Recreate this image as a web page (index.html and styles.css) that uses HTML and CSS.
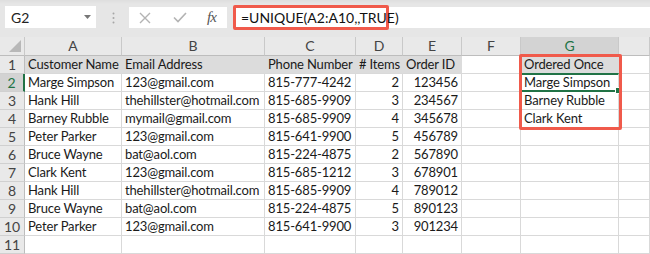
FILE: index.html
```html
<!DOCTYPE html>
<html>
<head>
<meta charset="utf-8">
<link rel="stylesheet" href="styles.css">
</head>
<body>
<div class="app">
  <div class="toolbar">
    <div class="namebox"><span class="ref">G2</span><svg class="caret" width="7" height="4" viewBox="0 0 7 4"><path d="M0 0H7L3.5 4Z" fill="#777"/></svg></div>
    <svg class="grip" width="3" height="12" viewBox="0 0 3 12"><circle cx="1.5" cy="1.5" r="1" fill="#a6a6a6"/><circle cx="1.5" cy="6" r="1" fill="#a6a6a6"/><circle cx="1.5" cy="10.5" r="1" fill="#a6a6a6"/></svg>
    <div class="fxbtns">
      <svg class="btn" width="12" height="12" viewBox="0 0 12 12"><path d="M1 1L11 11M11 1L1 11" stroke="#b3b3b3" stroke-width="1.4" fill="none"/></svg>
      <svg class="btn" width="14" height="11" viewBox="0 0 14 11"><path d="M1 5.5L5 9.5L13 1" stroke="#b3b3b3" stroke-width="1.6" fill="none"/></svg>
      <span class="fx">fx</span>
    </div>
    <div class="formula"><span class="formula-text">=UNIQUE(A2:A10,,TRUE)</span></div>
  </div>
  <div class="sheet-wrap">
    <div class="sheet">
      <div class="hd corner"><svg width="12" height="12" viewBox="0 0 12 12"><path d="M12 0V12H0Z" fill="#b8b8b8"/></svg></div>
      <div class="hd">A</div><div class="hd">B</div><div class="hd">C</div><div class="hd">D</div><div class="hd">E</div><div class="hd">F</div><div class="hd hd-sel">G</div><div class="hd"></div>

      <div class="rh">1</div><div class="c fill">Customer Name</div><div class="c fill">Email Address</div><div class="c fill">Phone Number</div><div class="c fill"># Items</div><div class="c fill">Order ID</div><div class="c"></div><div class="c fill">Ordered Once</div><div class="c"></div>

      <div class="rh rh-sel">2</div><div class="c">Marge Simpson</div><div class="c">123@gmail.com</div><div class="c">815-777-4242</div><div class="c num">2</div><div class="c num">123456</div><div class="c"></div><div class="c sel">Marge Simpson</div><div class="c"></div>

      <div class="rh">3</div><div class="c">Hank Hill</div><div class="c">thehillster@hotmail.com</div><div class="c">815-685-9909</div><div class="c num">3</div><div class="c num">234567</div><div class="c"></div><div class="c">Barney Rubble</div><div class="c"></div>

      <div class="rh">4</div><div class="c">Barney Rubble</div><div class="c">mymail@gmail.com</div><div class="c">815-685-9909</div><div class="c num">4</div><div class="c num">345678</div><div class="c"></div><div class="c">Clark Kent</div><div class="c"></div>

      <div class="rh">5</div><div class="c">Peter Parker</div><div class="c">123@gmail.com</div><div class="c">815-641-9900</div><div class="c num">5</div><div class="c num">456789</div><div class="c"></div><div class="c"></div><div class="c"></div>

      <div class="rh">6</div><div class="c">Bruce Wayne</div><div class="c">bat@aol.com</div><div class="c">815-224-4875</div><div class="c num">2</div><div class="c num">567890</div><div class="c"></div><div class="c"></div><div class="c"></div>

      <div class="rh">7</div><div class="c">Clark Kent</div><div class="c">123@gmail.com</div><div class="c">815-685-1212</div><div class="c num">3</div><div class="c num">678901</div><div class="c"></div><div class="c"></div><div class="c"></div>

      <div class="rh">8</div><div class="c">Hank Hill</div><div class="c">thehillster@hotmail.com</div><div class="c">815-685-9909</div><div class="c num">4</div><div class="c num">789012</div><div class="c"></div><div class="c"></div><div class="c"></div>

      <div class="rh">9</div><div class="c">Bruce Wayne</div><div class="c">bat@aol.com</div><div class="c">815-224-4875</div><div class="c num">5</div><div class="c num">890123</div><div class="c"></div><div class="c"></div><div class="c"></div>

      <div class="rh">10</div><div class="c">Peter Parker</div><div class="c">123@gmail.com</div><div class="c">815-641-9900</div><div class="c num">3</div><div class="c num">901234</div><div class="c"></div><div class="c"></div><div class="c"></div>

      <div class="rh">11</div><div class="c"></div><div class="c"></div><div class="c"></div><div class="c"></div><div class="c"></div><div class="c"></div><div class="c"></div><div class="c"></div>
    </div>
    <div class="highlight"></div>
  </div>
</div>
</body>
</html>
```

FILE: styles.css
```css
html, body {
  margin: 0;
  padding: 0;
}
body {
  background: #e6e6e6;
  font-family: Lato, "Open Sans", sans-serif;
  color: #1a1a1a;
  width: 650px;
  height: 254px;
  overflow: hidden;
}
.app {
  display: flex;
  flex-direction: column;
}
.toolbar {
  height: 37px;
  display: flex;
  align-items: flex-start;
  padding-top: 6px;
  box-sizing: border-box;
  background: linear-gradient(#dedede 0, #e6e6e6 4px, #e6e6e6 100%);
}
.namebox {
  margin-left: 5px;
  width: 91px;
  height: 22px;
  background: #fff;
  display: flex;
  align-items: center;
  justify-content: space-between;
  padding: 0 5px 0 6px;
  box-sizing: border-box;
  font-size: 14px;
  color: #222;
}
.grip {
  margin: 6px 0 0 16px;
}
.fxbtns {
  margin-left: 14px;
  margin-top: 1px;
  width: 98px;
  height: 21px;
  background: #fff;
  display: flex;
  align-items: center;
  box-sizing: border-box;
  padding-left: 10px;
}
.fxbtns .btn:nth-child(2) {
  margin-left: 22px;
}
.fx {
  margin-left: 20px;
  font-family: "Liberation Serif", serif;
  font-style: italic;
  font-size: 15px;
  color: #555;
  letter-spacing: -1px;
}
.formula {
  margin-left: 6px;
  margin-top: 1px;
  flex: 1;
  height: 21px;
  background: #fff;
  display: flex;
  align-items: center;
}
.formula-text {
  height: 25px;
  box-sizing: border-box;
  border: 3px solid #f05a4b;
  border-radius: 2px;
  display: flex;
  align-items: center;
  padding: 0 8px 0 5px;
  font-size: 14px;
  color: #111;
  width: 156px;
}
.sheet-wrap {
  position: relative;
  background: #fff;
}
.sheet {
  display: grid;
  grid-template-columns: 25px 97px 143px 91px 47px 59px 59px 98px 31px;
  grid-template-rows: 19px repeat(11, 18px);
}
.hd {
  background: #e9e9e9;
  border-right: 1px solid #c9c9c9;
  border-bottom: 1px solid #bdbdbd;
  box-sizing: border-box;
  text-align: center;
  font-size: 14px;
  line-height: 18px;
  color: #444;
}
.hd-sel {
  background: #d3d3d3;
  color: #217346;
  border-bottom: 2px solid #217346;
}
.corner {
  display: flex;
  align-items: flex-end;
  justify-content: flex-end;
  padding: 0 3px 3px 0;
}
.rh {
  background: #e9e9e9;
  border-right: 1px solid #bdbdbd;
  border-bottom: 1px solid #d0d0d0;
  box-sizing: border-box;
  text-align: center;
  font-size: 14px;
  line-height: 17px;
  color: #444;
}
.rh-sel {
  background: #d3d3d3;
  color: #217346;
  border-right: 2px solid #217346;
}
.c {
  border-right: 1px solid #d9d9d9;
  border-bottom: 1px solid #d9d9d9;
  box-sizing: border-box;
  font-size: 13px;
  letter-spacing: -0.15px;
  line-height: 17px;
  padding: 0 3px;
  white-space: nowrap;
  overflow: hidden;
}
.fill {
  background: #dcdcdc;
  border-right-color: #dcdcdc;
}
.num {
  text-align: right;
}
.sel {
  position: relative;
  overflow: visible;
  border-top: 2px solid #217346;
  border-bottom: 2px solid #217346;
  margin-top: -1px;
  line-height: 15px;
}
.sel::after {
  content: "";
  position: absolute;
  right: -4px;
  bottom: -4px;
  width: 5px;
  height: 5px;
  background: #217346;
  border: 1px solid #fff;
}
.highlight {
  position: absolute;
  left: 519px;
  top: 17px;
  width: 103px;
  height: 76px;
  box-sizing: border-box;
  border: 3px solid #f05a4b;
  border-radius: 2px;
}
```
